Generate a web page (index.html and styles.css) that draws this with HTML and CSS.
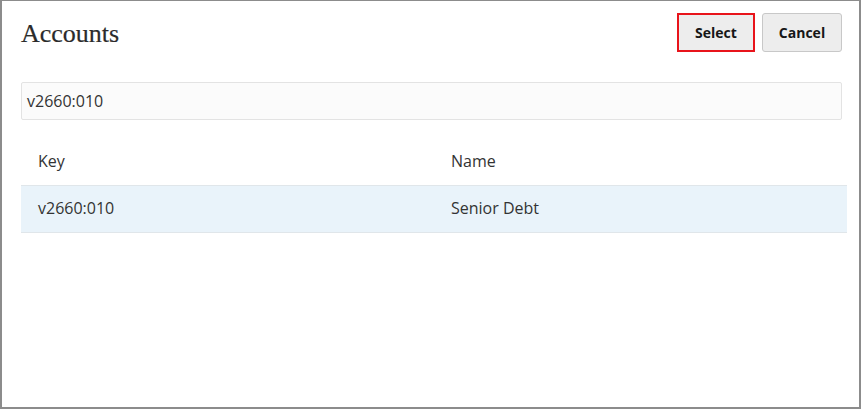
FILE: index.html
```html
<!DOCTYPE html>
<html lang="en">
<head>
<meta charset="utf-8">
<title>Accounts</title>
<link rel="stylesheet" href="styles.css">
</head>
<body>
<div class="dialog">
  <div class="header">
    <h1 class="title">Accounts</h1>
    <div class="actions">
      <button class="btn btn-focus">Select</button>
      <button class="btn">Cancel</button>
    </div>
  </div>
  <div class="search">v2660:010</div>
  <div class="table">
    <div class="row head">
      <div class="cell">Key</div>
      <div class="cell">Name</div>
    </div>
    <div class="row selected">
      <div class="cell">v2660:010</div>
      <div class="cell">Senior Debt</div>
    </div>
  </div>
</div>
</body>
</html>
```
FILE: styles.css
```css
html, body {
  margin: 0;
  padding: 0;
  background: #ffffff;
}
.dialog {
  box-sizing: border-box;
  width: 861px;
  height: 409px;
  border-top: 1px solid #8c8c8c;
  border-left: 2px solid #8c8c8c;
  border-right: 2px solid #8c8c8c;
  border-bottom: 2px solid #8c8c8c;
  padding: 12px 17px 0 19px;
  font-family: "Open Sans", "Noto Sans", sans-serif;
  color: #333333;
}
.header {
  display: flex;
  justify-content: space-between;
  align-items: flex-start;
}
.title {
  margin: 6px 0 0 0;
  font-family: "Liberation Serif", "Times New Roman", serif;
  font-weight: normal;
  font-size: 26px;
  line-height: 30px;
  color: #2b2b2b;
  -webkit-text-stroke: 0.2px #2b2b2b;
}
.actions {
  display: flex;
  gap: 7px;
}
.btn {
  box-sizing: border-box;
  height: 39px;
  padding: 0 0 1px 0;
  border: 1px solid #c8c8c8;
  border-radius: 3px;
  background: #ededed;
  font-family: "Open Sans", "Noto Sans", sans-serif;
  font-weight: bold;
  font-size: 14px;
  color: #161616;
  width: 80px;
}
.btn-focus {
  width: 78px;
  border: 2px solid #e8141b;
  border-radius: 0;
}
.search {
  box-sizing: border-box;
  margin-top: 30px;
  height: 38px;
  border: 1px solid #e3e3e3;
  border-radius: 2px;
  background: #fbfbfb;
  padding: 0 5px;
  font-size: 16px;
  line-height: 36px;
  color: #333333;
}
.table {
  margin-top: 21px;
  margin-right: -5px;
}
.row {
  display: grid;
  grid-template-columns: 1fr 1fr;
  border-bottom: 1px solid #e0e6ea;
  padding: 9px 0 13px 0;
  font-size: 16px;
  line-height: 22px;
}
.row.selected {
  background: #e9f3fa;
  padding: 11px 0 13px 0;
}
.cell {
  padding-left: 17px;
}
```
